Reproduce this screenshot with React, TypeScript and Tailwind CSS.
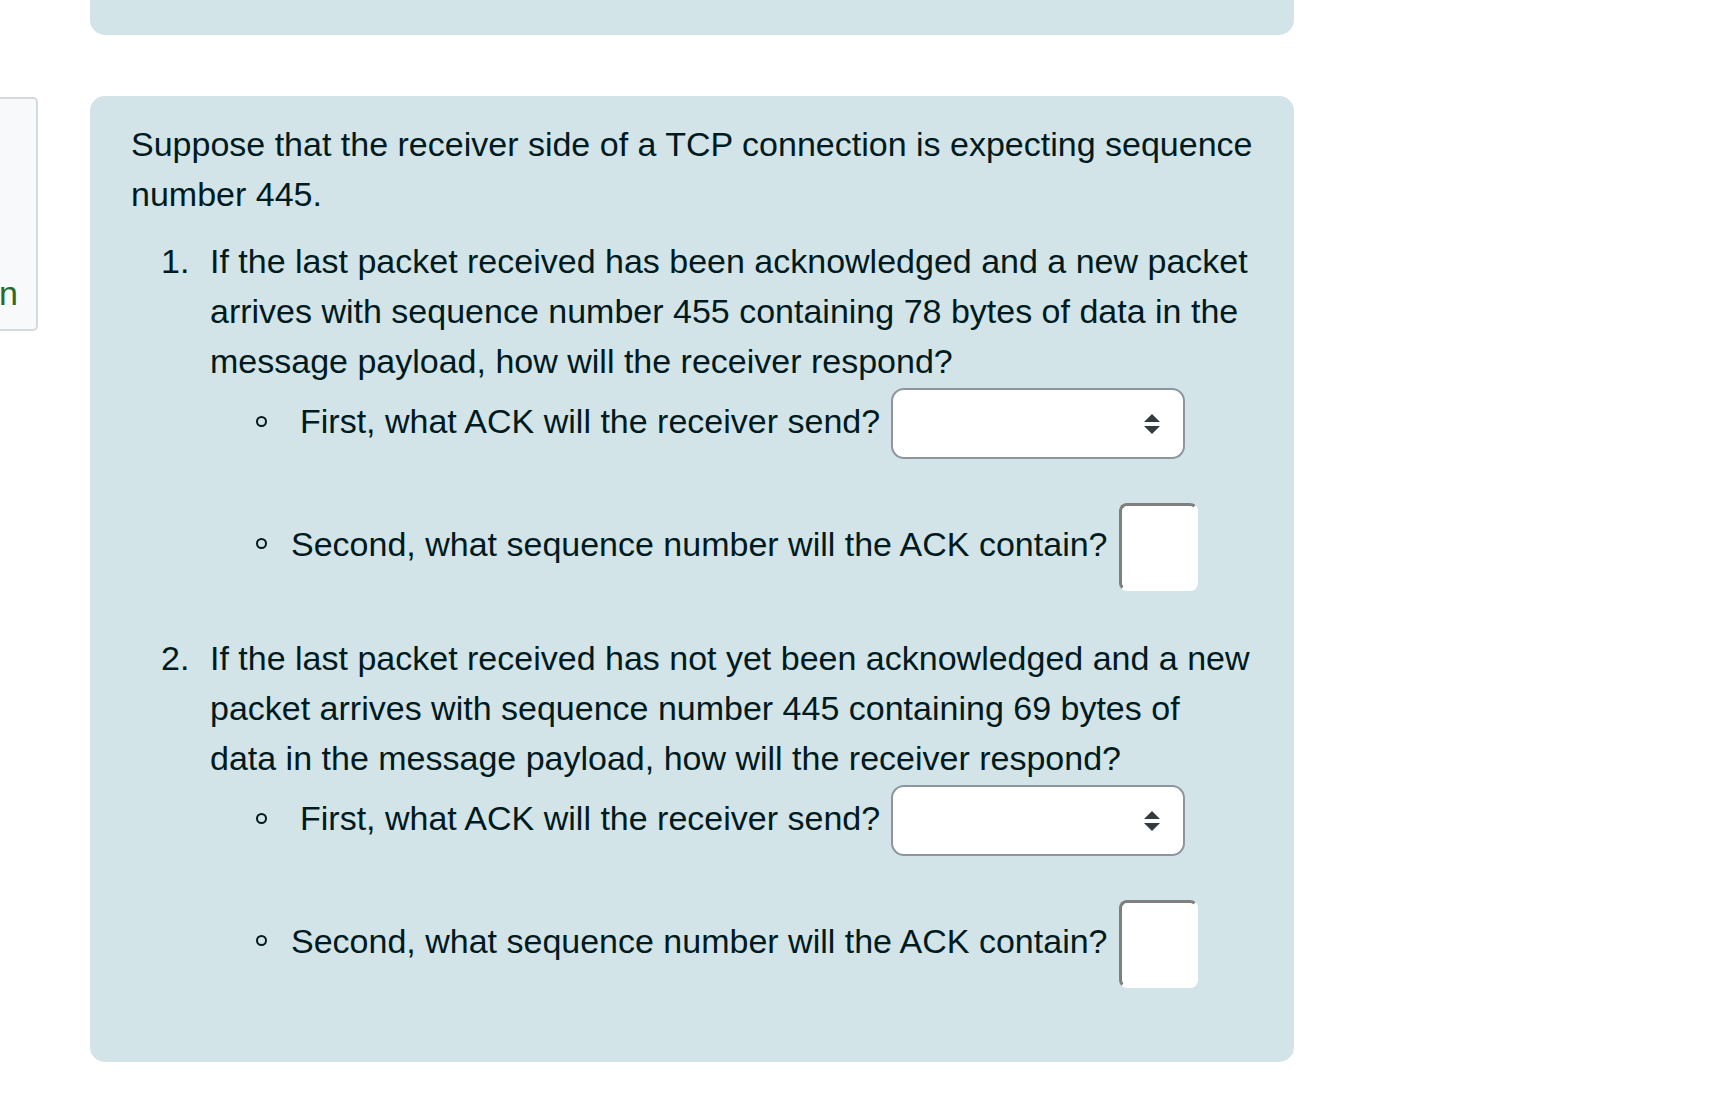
import React from "react";

function SelectBox() {
  return (
    <div className="relative w-[294px] h-[71px] shrink-0 bg-white border-2 border-[#8f959e] rounded-[13px]">
      <svg
        className="absolute right-[23px] top-1/2 -translate-y-1/2"
        width="16"
        height="20"
        viewBox="0 0 4 5"
      >
        <path d="M2 0L0 2h4zm0 5L0 3h4z" fill="#343a40" />
      </svg>
    </div>
  );
}

function InputBox() {
  return (
    <div className="w-[79px] h-[88px] shrink-0 bg-white border-[3px] border-t-[#7f7f7f] border-l-[#7f7f7f] border-r-white border-b-white rounded-[8px]" />
  );
}

function Bullet() {
  return <span className="block w-[11px] h-[11px] shrink-0 rounded-full border-2 border-[#001a1e]" />;
}

function Item({
  num,
  lines,
}: {
  num: string;
  lines: string[];
}) {
  return (
    <li className="flex">
      <span className="w-[79px] shrink-0 pl-[30px] leading-[50px]">{num}</span>
      <div className="flex flex-col">
        <div className="leading-[50px] whitespace-nowrap">
          {lines.map((l, i) => (
            <span key={i} className="block">
              {l}
            </span>
          ))}
        </div>
        <div className="mt-[2px] h-[71px] flex items-center">
          <div className="flex items-center pl-[46px] pb-[5px] leading-[50px] whitespace-nowrap">
            <Bullet />
            <span className="ml-[33px]">First, what ACK will the receiver send?</span>
          </div>
          <div className="ml-[11px]">
            <SelectBox />
          </div>
        </div>
        <div className="mt-[44px] h-[88px] flex items-center">
          <div className="flex items-center pl-[46px] pb-[7px] leading-[50px] whitespace-nowrap">
            <Bullet />
            <span className="ml-[24px]">Second, what sequence number will the ACK contain?</span>
          </div>
          <div className="ml-[11px]">
            <InputBox />
          </div>
        </div>
      </div>
    </li>
  );
}

export default function App() {
  return (
    <div className="min-h-screen bg-white flex font-['Liberation_Sans',Arial,Helvetica,sans-serif] text-[34px] text-[#001a1e] overflow-hidden">
      <div className="w-[38px] shrink-0 pt-[97px]">
        <div className="-ml-[10px] w-[48px] h-[234px] bg-[#f8f9fa] border-2 border-[#d5d9dd] rounded-[5px] overflow-hidden flex flex-col justify-end pb-[16px] pl-[7px]">
          <span className="text-[#2b6a2b] leading-[40px]">n</span>
        </div>
      </div>
      <div className="ml-[52px] w-[1204px] shrink-0">
        <div className="h-[35px] bg-[#d2e4e8] rounded-b-[15px]" />
        <div className="mt-[61px] bg-[#d2e4e8] rounded-[15px] pt-[23px] pb-[74px] px-[41px]">
          <p className="leading-[50px] mb-[17px] whitespace-nowrap">
            <span className="block">Suppose that the receiver side of a TCP connection is expecting sequence</span>
            <span className="block">number 445.</span>
          </p>
          <ol className="flex flex-col gap-[42px]">
            <Item
              num="1."
              lines={[
                "If the last packet received has been acknowledged and a new packet",
                "arrives with sequence number 455 containing 78 bytes of data in the",
                "message payload, how will the receiver respond?",
              ]}
            />
            <Item
              num="2."
              lines={[
                "If the last packet received has not yet been acknowledged and a new",
                "packet arrives with sequence number 445 containing 69 bytes of",
                "data in the message payload, how will the receiver respond?",
              ]}
            />
          </ol>
        </div>
      </div>
    </div>
  );
}
